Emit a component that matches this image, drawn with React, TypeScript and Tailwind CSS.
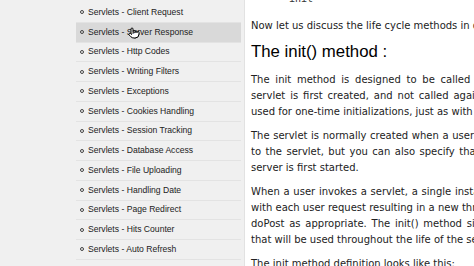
import { Pointer } from 'lucide-react';

const TOPICS = [
  'Servlets - Client Request',
  'Servlets - Server Response',
  'Servlets - Http Codes',
  'Servlets - Writing Filters',
  'Servlets - Exceptions',
  'Servlets - Cookies Handling',
  'Servlets - Session Tracking',
  'Servlets - Database Access',
  'Servlets - File Uploading',
  'Servlets - Handling Date',
  'Servlets - Page Redirect',
  'Servlets - Hits Counter',
  'Servlets - Auto Refresh',
];

const PARAGRAPHS = [
  [
    'The init method is designed to be called only once. It is called when the',
    'servlet is first created, and not called again for each user request. So, it is',
    'used for one-time initializations, just as with the init method of applets.',
  ],
  [
    'The servlet is normally created when a user first invokes a URL corresponding',
    'to the servlet, but you can also specify that the servlet be loaded when the',
    'server is first started.',
  ],
  [
    'When a user invokes a servlet, a single instance of each servlet gets created,',
    'with each user request resulting in a new thread that is handed off to doGet or',
    'doPost as appropriate. The init() method simply creates or loads some data',
    'that will be used throughout the life of the servlet.',
  ],
  ['The init method definition looks like this:'],
];

export default function App() {
  return (
    <div className="w-[474px] h-[266px] overflow-hidden flex bg-white">
      {/* Sidebar */}
      <aside className="w-[245px] shrink-0 bg-[#f0f0f0] border-r border-[#e2e2e2] pt-[3px] pl-[76px] pr-[3px]">
        <ul className="font-['Liberation_Sans',Arial,sans-serif] text-[8.6px] text-[#222]">
          {TOPICS.map((t, i) => (
            <li
              key={t}
              className={`relative h-[19.75px] flex items-center gap-[4px] pl-[4px] border-b border-[#e3e3e3] ${
                i === 1 ? 'bg-[#d9d9d9]' : ''
              }`}
            >
              <span className="w-[4px] h-[4px] rounded-full border border-[#444] shrink-0" />
              <span>{t}</span>
              {i === 1 && (
                <Pointer
                  className="absolute left-[52px] top-[4px] w-[12px] h-[12px] text-black"
                  fill="white"
                  strokeWidth={2}
                />
              )}
            </li>
          ))}
        </ul>
      </aside>

      {/* Content */}
      <main className="flex-1 min-w-0 overflow-hidden pl-[6px] font-['DejaVu_Sans',Verdana,sans-serif] text-[#222]">
        <div className="w-[396px]">
          <div className="-mt-[9px] h-[13px] pl-[38px] font-['DejaVu_Sans_Mono',monospace] text-[10px] text-[#333]">
            init
          </div>
          <p className="mt-[14px] text-[10px] leading-[16px] whitespace-nowrap">
            Now let us discuss the life cycle methods in detail.
          </p>
          <h2 className="mt-[8px] font-['Liberation_Sans',Arial,sans-serif] text-[16.8px] leading-[20px] text-black">
            The init() method :
          </h2>
          <div className="mt-[10px] space-y-[8px] text-[10px] leading-[16px]">
            {PARAGRAPHS.map((lines, pi) => (
              <div key={pi}>
                {lines.map((l, li) => (
                  <div
                    key={li}
                    className={
                      li < lines.length - 1
                        ? 'text-justify [text-align-last:justify] whitespace-nowrap'
                        : 'whitespace-nowrap'
                    }
                  >
                    {l}
                  </div>
                ))}
              </div>
            ))}
          </div>
        </div>
      </main>
    </div>
  );
}
